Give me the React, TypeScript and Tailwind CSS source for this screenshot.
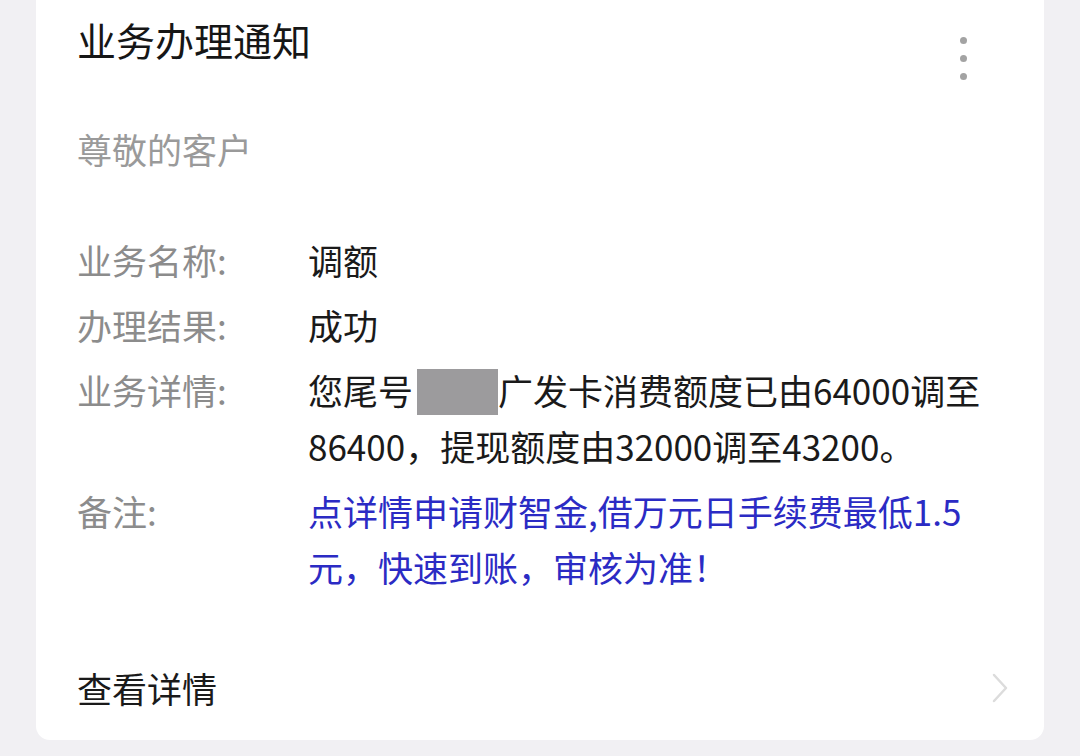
export default function App() {
  const rows = [
    { label: "业务名称:", value: <span>调额</span> },
    { label: "办理结果:", value: <span>成功</span> },
    {
      label: "业务详情:",
      value: (
        <span>
          您尾号
          <span className="inline-block w-[81px] h-[46px] bg-[#9c9b9d] align-[-10px] ml-[4px]" />
          广发卡消费额度已由64000调至
          <br />
          86400，提现额度由32000调至43200。
        </span>
      ),
    },
    {
      label: "备注:",
      value: (
        <span className="text-[#2b2bc4]">
          点详情申请财智金,借万元日手续费最低1.5
          <br />
          元，快速到账，审核为准！
        </span>
      ),
    },
  ];

  return (
    <div
      className="w-[1080px] h-[756px] bg-[#f1f0f3] px-[36px] pb-[16px]"
      style={{ fontFamily: '"Noto Sans CJK SC", "Noto Sans", sans-serif' }}
    >
      <div className="h-full bg-white rounded-b-[14px] flex flex-col pl-[41px] pr-[36px]">
        {/* Header */}
        <div className="flex items-start justify-between pt-[11px]">
          <h1 className="text-[39px] leading-[56px] text-[#161616]">业务办理通知</h1>
          <div className="flex flex-col items-center gap-[11px] mt-[26px] mr-[41px]">
            <span className="w-[7px] h-[7px] rounded-full bg-[#a3a3a3]" />
            <span className="w-[7px] h-[7px] rounded-full bg-[#a3a3a3]" />
            <span className="w-[7px] h-[7px] rounded-full bg-[#a3a3a3]" />
          </div>
        </div>

        {/* Greeting */}
        <p className="mt-[41px] text-[35px] leading-[56px] text-[#9a9a9a]">尊敬的客户</p>

        {/* Fields */}
        <div className="mt-[55px] flex flex-col gap-[9px] text-[35px] leading-[56px]">
          {rows.map((row) => (
            <div key={row.label} className="flex">
              <span className="w-[231px] shrink-0 text-[#8c8c8c]">{row.label}</span>
              <div className="text-[#1a1a1a] whitespace-nowrap">{row.value}</div>
            </div>
          ))}
        </div>

        {/* Footer link */}
        <div className="mt-[65px] flex items-center justify-between">
          <span className="text-[35px] leading-[56px] text-[#1a1a1a]">查看详情</span>
          <svg width="16" height="30" viewBox="0 0 16 30" fill="none">
            <path d="M2 2 L14 15 L2 28" stroke="#dcdcdc" strokeWidth="2.5" strokeLinecap="round" strokeLinejoin="round" />
          </svg>
        </div>
      </div>
    </div>
  );
}
